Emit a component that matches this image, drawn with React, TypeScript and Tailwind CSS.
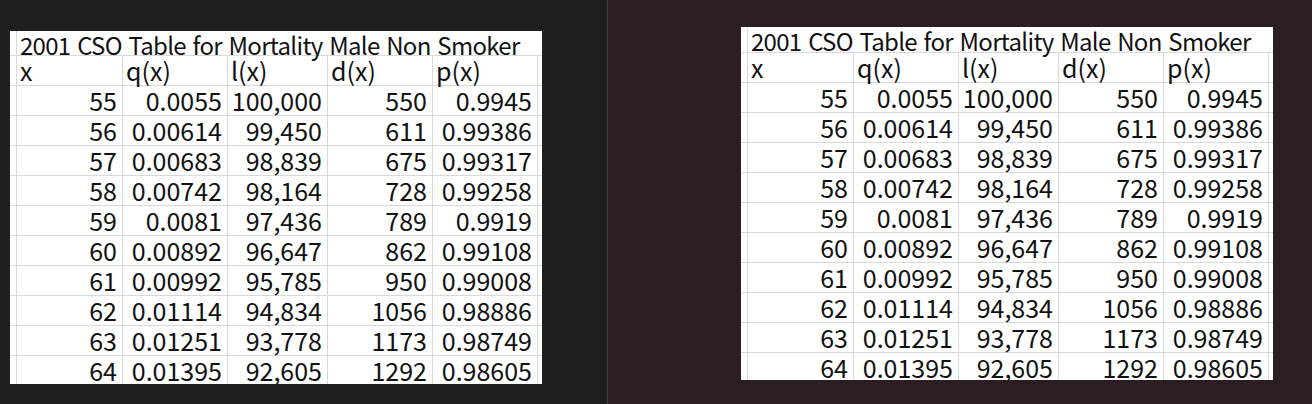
import React from "react";

type Row = [string, string, string, string, string];

const rows: Row[] = [
  ["55", "0.0055", "100,000", "550", "0.9945"],
  ["56", "0.00614", "99,450", "611", "0.99386"],
  ["57", "0.00683", "98,839", "675", "0.99317"],
  ["58", "0.00742", "98,164", "728", "0.99258"],
  ["59", "0.0081", "97,436", "789", "0.9919"],
  ["60", "0.00892", "96,647", "862", "0.99108"],
  ["61", "0.00992", "95,785", "950", "0.99008"],
  ["62", "0.01114", "94,834", "1056", "0.98886"],
  ["63", "0.01251", "93,778", "1173", "0.98749"],
  ["64", "0.01395", "92,605", "1292", "0.98605"],
];

const headers = ["x", "q(x)", "l(x)", "d(x)", "p(x)"];

const grid =
  "grid grid-cols-[6px_106px_105px_100px_105px_105px_1fr] border-t border-[#d9d9d9]";

function Cell({
  children,
  right,
}: {
  children?: React.ReactNode;
  right?: boolean;
}) {
  return (
    <div
      className={
        "h-[29px] whitespace-nowrap border-l border-[#d9d9d9] leading-[29px] " +
        (right ? "pr-[5px] text-right" : "pl-[3px]")
      }
    >
      {children}
    </div>
  );
}

function Sheet({ titleClass }: { titleClass: string }) {
  return (
    <div
      className="h-[353px] w-[532px] overflow-hidden bg-white text-[25px] text-[#111]"
      style={{ fontFamily: '"Noto Sans CJK SC", "Noto Sans", sans-serif' }}
    >
      {/* title row, its top is cut off by the screenshot */}
      <div className={"grid grid-cols-[6px_526px_1fr] " + titleClass}>
        <div />
        <div className="flex h-full items-end border-l border-[#d9d9d9] pl-[3px]">
          <span className="block h-[29px] shrink-0 whitespace-nowrap text-[24px] leading-[28px] tracking-[-0.7px] [word-spacing:2px]">
            2001 CSO Table for Mortality Male Non Smoker
          </span>
        </div>
        <div className="border-l border-[#d9d9d9]" />
      </div>

      <div className={grid}>
        <div />
        {headers.map((h) => (
          <Cell key={h}>{h}</Cell>
        ))}
        <Cell />
      </div>

      {rows.map((r) => (
        <div key={r[0]} className={grid}>
          <div />
          {r.map((v, i) => (
            <Cell key={i} right>
              {v}
            </Cell>
          ))}
          <Cell />
        </div>
      ))}
    </div>
  );
}

export default function App() {
  return (
    <div className="flex h-[404px] w-[1312px] overflow-hidden">
      <div className="w-[607px] shrink-0 bg-[#1f1f1f] pl-[10px] pt-[31px]">
        <Sheet titleClass="h-[24px]" />
      </div>
      <div className="w-px shrink-0 bg-[#3d3d3d]" />
      <div className="flex-1 bg-[#2b1d21] pl-[133px] pt-[27px]">
        <Sheet titleClass="h-[25px]" />
      </div>
    </div>
  );
}
